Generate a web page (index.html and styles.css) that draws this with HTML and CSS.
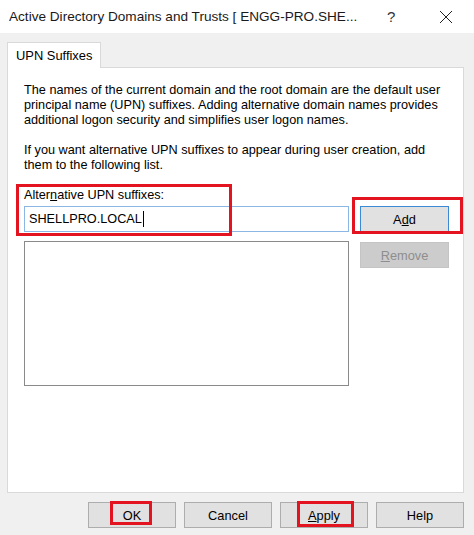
FILE: index.html
```html
<!DOCTYPE html>
<html lang="en">
<head>
    <meta charset="UTF-8">
    <title>Active Directory Domains and Trusts</title>
    <link rel="stylesheet" href="styles.css">
</head>
<body>

    <!-- Window title bar -->
    <div class="titlebar">
        <span class="title">Active Directory Domains and Trusts [ ENGG-PRO.SHE...</span>
        <span class="help-btn">?</span>
        <span class="close-btn">
            <svg width="14" height="14" viewBox="0 0 14 14">
                <path d="M1 1 L13 13 M13 1 L1 13" stroke="#222" stroke-width="1" fill="none"/>
            </svg>
        </span>
    </div>

    <div class="dialog">
        <div class="tab">UPN Suffixes</div>

        <div class="panel">
            <p class="info">The names of the current domain and the root domain are the default user principal name (UPN) suffixes. Adding alternative domain names provides additional logon security and simplifies user logon names.</p>
            <p class="info">If you want alternative UPN suffixes to appear during user creation, add them to the following list.</p>

            <div class="suffix-area">
                <div class="left-col">
                    <div class="field-group">
                        <label class="field-label" for="upn-input">Alter<u>n</u>ative UPN suffixes:</label>
                        <div class="text-input" id="upn-input">SHELLPRO.LOCAL<span class="caret"></span></div>
                        <span class="mark mark-field"></span>
                    </div>
                    <div class="list-box"></div>
                </div>
                <div class="right-col">
                    <div class="btn-wrap">
                        <button class="btn btn-default">A<u>d</u>d</button>
                        <span class="mark mark-add"></span>
                    </div>
                    <button class="btn btn-disabled"><u>R</u>emove</button>
                </div>
            </div>
        </div>

        <div class="footer">
            <div class="btn-wrap">
                <button class="btn btn-footer">OK</button>
                <span class="mark mark-ok"></span>
            </div>
            <button class="btn btn-footer">Cancel</button>
            <div class="btn-wrap">
                <button class="btn btn-footer"><u>A</u>pply</button>
                <span class="mark mark-apply"></span>
            </div>
            <button class="btn btn-footer">Help</button>
        </div>
    </div>

</body>
</html>
```

FILE: styles.css
```css
body {
    margin: 0;
    padding: 0;
    width: 474px;
    height: 535px;
    overflow: hidden;
    font-family: "Liberation Sans", Arial, sans-serif;
    font-size: 12.7px;
    color: #000;
    background-color: #f0f0f0;
}

/* Title bar */
.titlebar {
    height: 33px;
    background-color: #fff;
    display: flex;
    align-items: center;
    padding-left: 9px;
}

.title {
    font-size: 13.6px;
    color: #1a1a1a;
    white-space: nowrap;
    overflow: hidden;
    width: 378px;
}

.help-btn {
    font-size: 15px;
    color: #333;
    width: 52px;
}

.close-btn {
    display: flex;
    align-items: center;
}

/* Dialog body */
.dialog {
    padding: 9px 0 0 7px;
}

.tab {
    width: 92px;
    height: 25px;
    background-color: #fff;
    border: 1px solid #d9d9d9;
    border-bottom: none;
    font-size: 12.9px;
    line-height: 25px;
    text-indent: 8px;
    position: relative;
    z-index: 1;
    margin-bottom: -1px;
}

.panel {
    width: 455px;
    height: 424px;
    background-color: #fff;
    border: 1px solid #d9d9d9;
}

.info {
    margin: 0 0 15px 16px;
    line-height: 15px;
    width: 425px;
}

.info:first-child {
    margin-top: 15px;
}

/* Suffix input and list */
.suffix-area {
    display: flex;
    gap: 11px;
    padding-left: 16px;
}

.left-col {
    width: 325px;
}

.field-group {
    position: relative;
}

.field-label {
    display: block;
    line-height: 15px;
    margin-bottom: 3px;
}

.text-input {
    height: 24px;
    border: 1px solid #8cb6e4;
    padding-left: 4px;
    font-size: 12.7px;
    display: flex;
    align-items: center;
}

.caret {
    display: inline-block;
    width: 1px;
    height: 16px;
    background-color: #000;
    margin-left: 1px;
}

.list-box {
    margin-top: 9px;
    height: 143px;
    border: 1px solid #8a8a8a;
}

.right-col {
    display: flex;
    flex-direction: column;
    gap: 10px;
    padding-top: 18px;
}

.btn-wrap {
    position: relative;
    display: inline-block;
}

.btn {
    font-family: "Liberation Sans", Arial, sans-serif;
    font-size: 12.8px;
    width: 89px;
    height: 26px;
    padding: 0;
    margin: 0;
    color: #000;
    background-color: #e1e1e1;
    border: 1px solid #adadad;
    display: block;
}

.btn-default {
    border-color: #3c8ad6;
}

.btn-disabled {
    background-color: #cccccc;
    border-color: #c4c4c4;
    color: #8e8e8e;
}

/* Bottom buttons */
.footer {
    display: flex;
    gap: 8px;
    padding-left: 81px;
    margin-top: 9px;
}

.btn-footer {
    width: 88px;
}

/* Red annotation boxes */
.mark {
    position: absolute;
    border: 3px solid #e3141f;
    box-sizing: border-box;
}

.mark-field {
    left: -8px;
    top: -4px;
    width: 216px;
    height: 52px;
}

.mark-add {
    left: -8px;
    top: -9px;
    width: 111px;
    height: 37px;
}

.mark-ok {
    left: 22px;
    top: -1px;
    width: 42px;
    height: 24px;
}

.mark-apply {
    left: 17px;
    top: -1px;
    width: 57px;
    height: 26px;
}
```
